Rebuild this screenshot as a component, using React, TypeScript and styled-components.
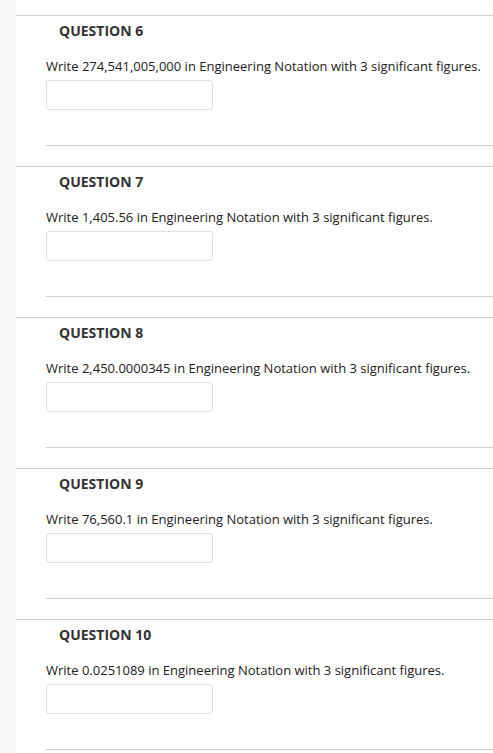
import styled, { createGlobalStyle } from "styled-components"

const GlobalStyle = createGlobalStyle`
    html, body {
        margin: 0;
        padding: 0;
        background-color: #ffffff;
    }
    body {
        font-family: "Open Sans", "Liberation Sans", sans-serif;
    }
`

const Page = styled.div`
    display: flex;
    min-height: 753px;
    width: 493px;
    overflow: hidden;
`

const SideStrip = styled.div`
    width: 16px;
    flex-shrink: 0;
    background-color: #f7f7f7;
`

const Content = styled.div`
    flex: 1;
    padding-top: 15px;
    display: flex;
    flex-direction: column;
    gap: 20px;
`

const QuestionBlock = styled.section`
    border-top: 1px solid #cfcfcf;
    padding-top: 5px;
`

const QuestionTitle = styled.h3`
    margin: 0 0 0 43px;
    font-size: 14px;
    line-height: 19px;
    font-weight: 700;
    color: #333333;
`

const QuestionBody = styled.div`
    margin-left: 30px;
    padding-top: 17px;
    padding-bottom: 35px;
    border-bottom: 1px solid #cfcfcf;
`

const Prompt = styled.p`
    margin: 0 0 5px 0;
    font-size: 13px;
    line-height: 18px;
    color: #222222;
`

const AnswerInput = styled.input`
    display: block;
    box-sizing: border-box;
    width: 167px;
    height: 30px;
    border: 1px solid #e0e0e0;
    border-radius: 3px;
    background-color: #ffffff;
    outline: none;
`

const questions = [
    { number: 6, value: "274,541,005,000" },
    { number: 7, value: "1,405.56" },
    { number: 8, value: "2,450.0000345" },
    { number: 9, value: "76,560.1" },
    { number: 10, value: "0.0251089" },
]

export default function App() {
    return (
        <>
            <GlobalStyle />
            <Page>
                <SideStrip />
                <Content>
                    {questions.map((q) => (
                        <QuestionBlock key={q.number}>
                            <QuestionTitle>QUESTION {q.number}</QuestionTitle>
                            <QuestionBody>
                                <Prompt>
                                    Write {q.value} in Engineering Notation with 3 significant figures.
                                </Prompt>
                                <AnswerInput type="text" />
                            </QuestionBody>
                        </QuestionBlock>
                    ))}
                </Content>
            </Page>
        </>
    )
}
